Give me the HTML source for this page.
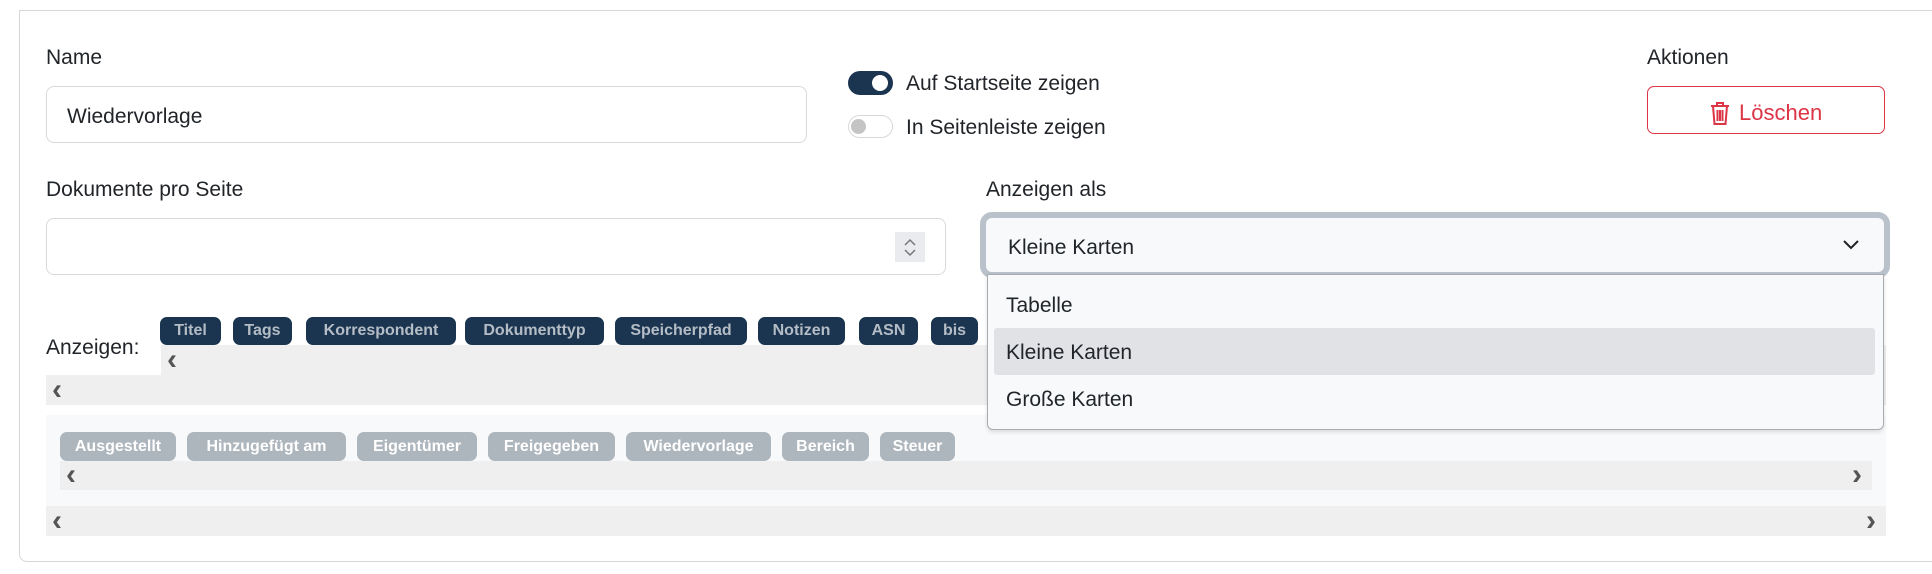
<!DOCTYPE html>
<html><head><meta charset="utf-8"><style>
*{box-sizing:border-box;margin:0;padding:0}
body{width:1932px;height:574px;background:#fff;font-family:"Liberation Sans",sans-serif;color:#212529;position:relative;overflow:hidden;font-size:21px}
.a{position:absolute}
.card{left:19px;top:10px;width:1940px;height:552px;border:1.5px solid #d5d8db;border-right:none;border-radius:0 0 0 8px}
.lbl{font-size:21px;line-height:24px}
.inp{border:1px solid #d6d9dc;border-radius:8px;background:#fff}
.badge{position:absolute;top:317px;height:28px;border-radius:7px;background:#1b3550;color:#b4bcc5;font-weight:bold;font-size:16px;line-height:28px;text-align:center}
.gb{position:absolute;top:432px;height:29px;border-radius:7px;background:#adb5bd;color:#fff;font-weight:bold;font-size:16px;line-height:29px;text-align:center}
.chev{position:absolute;color:#555;font-size:30px;font-weight:bold;line-height:30px}
</style></head><body>
<div class="a card"></div>

<div class="a lbl" style="left:46px;top:46px">Name</div>
<div class="a inp" style="left:46px;top:86px;width:761px;height:57px"></div>
<div class="a lbl" style="left:67px;top:105px">Wiedervorlage</div>

<div class="a" style="left:848px;top:71px;width:45px;height:24px;border-radius:12px;background:#1b3550"></div>
<div class="a" style="left:872px;top:75px;width:16px;height:16px;border-radius:50%;background:#fff"></div>
<div class="a lbl" style="left:906px;top:72px">Auf Startseite zeigen</div>
<div class="a" style="left:848px;top:115px;width:45px;height:23px;border-radius:12px;background:#fff;border:1px solid #d6d9dc"></div>
<div class="a" style="left:851px;top:119px;width:15px;height:15px;border-radius:50%;background:#c4c4c4"></div>
<div class="a lbl" style="left:906px;top:116px">In Seitenleiste zeigen</div>

<div class="a lbl" style="left:1647px;top:46px">Aktionen</div>
<div class="a" style="left:1647px;top:86px;width:238px;height:48px;border:1.5px solid #dc3545;border-radius:7px"></div>
<svg class="a" style="left:1709px;top:100px" width="22" height="26" viewBox="0 0 22 26"><g fill="none" stroke="#dc3545" stroke-width="2"><path d="M2 6h18M8 6V3h6v3M4 6l1.5 18h11L18 6M8.5 10v11M11 10v11M13.5 10v11"/></g></svg>
<div class="a lbl" style="left:1739px;top:101px;color:#dc3545;font-size:22px">Löschen</div>

<div class="a lbl" style="left:46px;top:178px">Dokumente pro Seite</div>
<div class="a inp" style="left:46px;top:218px;width:900px;height:57px"></div>
<div class="a" style="left:895px;top:232px;width:30px;height:30px;background:#e9ebee"></div>
<svg class="a" style="left:895px;top:232px" width="30" height="30"><path d="M10 13l5-5 5 5M10 18l5 5 5-5" fill="none" stroke="#777" stroke-width="1.5"/></svg>

<div class="a lbl" style="left:986px;top:178px">Anzeigen als</div>
<div class="a" style="left:980px;top:212px;width:910px;height:66px;border:6px solid #b9c1cb;border-radius:12px;background:#f8f9fa"></div>
<div class="a lbl" style="left:1008px;top:236px">Kleine Karten</div>
<svg class="a" style="left:1842px;top:238px" width="18" height="14"><path d="M2 3l7 7 7-7" fill="none" stroke="#222" stroke-width="2"/></svg>

<div class="a lbl" style="left:46px;top:336px">Anzeigen:</div>
<div class="a" style="left:161px;top:345px;width:1725px;height:30px;background:#efefef"></div>
<div class="chev" style="left:167px;top:345px">‹</div>
<div class="a" style="left:46px;top:375px;width:1840px;height:30px;background:#efefef"></div>
<div class="chev" style="left:52px;top:375px">‹</div>

<div class="badge" style="left:160px;width:61px">Titel</div>
<div class="badge" style="left:233px;width:59px">Tags</div>
<div class="badge" style="left:306px;width:150px">Korrespondent</div>
<div class="badge" style="left:465px;width:139px">Dokumenttyp</div>
<div class="badge" style="left:615px;width:132px">Speicherpfad</div>
<div class="badge" style="left:758px;width:87px">Notizen</div>
<div class="badge" style="left:859px;width:59px">ASN</div>
<div class="badge" style="left:931px;width:47px">bis</div>

<div class="a" style="left:46px;top:415px;width:1840px;height:121px;background:#f8f9fa"></div>
<div class="gb" style="left:60px;width:116px">Ausgestellt</div>
<div class="gb" style="left:187px;width:159px">Hinzugefügt am</div>
<div class="gb" style="left:357px;width:120px">Eigentümer</div>
<div class="gb" style="left:488px;width:127px">Freigegeben</div>
<div class="gb" style="left:626px;width:145px">Wiedervorlage</div>
<div class="gb" style="left:782px;width:87px">Bereich</div>
<div class="gb" style="left:880px;width:75px">Steuer</div>
<div class="a" style="left:60px;top:461px;width:1812px;height:29px;background:#efefef"></div>
<div class="chev" style="left:66px;top:460px">‹</div>
<div class="chev" style="left:1852px;top:460px">›</div>
<div class="a" style="left:46px;top:506px;width:1840px;height:30px;background:#efefef"></div>
<div class="chev" style="left:52px;top:506px">‹</div>
<div class="chev" style="left:1866px;top:506px">›</div>

<div class="a" style="left:987px;top:274px;width:897px;height:156px;background:#f8f9fa;border:1px solid #a9adb2;border-radius:0 0 6px 6px;box-shadow:0 2px 4px rgba(0,0,0,.12)"></div>
<div class="a lbl" style="left:1006px;top:294px">Tabelle</div>
<div class="a" style="left:994px;top:328px;width:881px;height:47px;background:#e1e2e6;border-radius:3px"></div>
<div class="a lbl" style="left:1006px;top:341px">Kleine Karten</div>
<div class="a lbl" style="left:1006px;top:388px">Große Karten</div>
</body></html>
